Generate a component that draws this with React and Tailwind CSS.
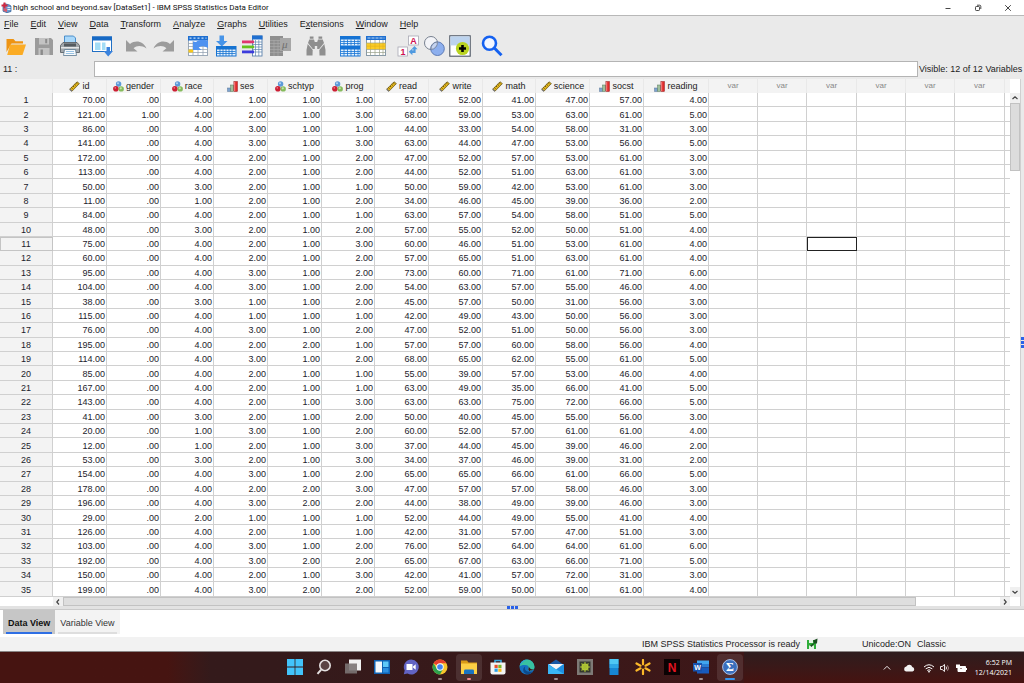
import React, { useState } from 'react';

const VARIABLES = [
  { name: 'id', measure: 'scale' },
  { name: 'gender', measure: 'nominal' },
  { name: 'race', measure: 'nominal' },
  { name: 'ses', measure: 'ordinal' },
  { name: 'schtyp', measure: 'nominal' },
  { name: 'prog', measure: 'nominal' },
  { name: 'read', measure: 'scale' },
  { name: 'write', measure: 'scale' },
  { name: 'math', measure: 'scale' },
  { name: 'science', measure: 'scale' },
  { name: 'socst', measure: 'ordinal' },
  { name: 'reading', measure: 'ordinal' },
];

const EMPTY_COLUMNS = [0, 1, 2, 3, 4, 5];

const COLUMN_WIDTHS = [53, 54, 54, 53, 54, 54, 53, 54, 54, 53, 54, 54, 65, 49, 49, 50, 49, 49, 50, 5];

const CASES = [
  [70, 0, 4, 1, 1, 1, 57, 52, 41, 47, 57, 4],
  [121, 1, 4, 2, 1, 3, 68, 59, 53, 63, 61, 5],
  [86, 0, 4, 3, 1, 1, 44, 33, 54, 58, 31, 3],
  [141, 0, 4, 3, 1, 3, 63, 44, 47, 53, 56, 5],
  [172, 0, 4, 2, 1, 2, 47, 52, 57, 53, 61, 3],
  [113, 0, 4, 2, 1, 2, 44, 52, 51, 63, 61, 3],
  [50, 0, 3, 2, 1, 1, 50, 59, 42, 53, 61, 3],
  [11, 0, 1, 2, 1, 2, 34, 46, 45, 39, 36, 2],
  [84, 0, 4, 2, 1, 1, 63, 57, 54, 58, 51, 5],
  [48, 0, 3, 2, 1, 2, 57, 55, 52, 50, 51, 4],
  [75, 0, 4, 2, 1, 3, 60, 46, 51, 53, 61, 4],
  [60, 0, 4, 2, 1, 2, 57, 65, 51, 63, 61, 4],
  [95, 0, 4, 3, 1, 2, 73, 60, 71, 61, 71, 6],
  [104, 0, 4, 3, 1, 2, 54, 63, 57, 55, 46, 4],
  [38, 0, 3, 1, 1, 2, 45, 57, 50, 31, 56, 3],
  [115, 0, 4, 1, 1, 1, 42, 49, 43, 50, 56, 3],
  [76, 0, 4, 3, 1, 2, 47, 52, 51, 50, 56, 3],
  [195, 0, 4, 2, 2, 1, 57, 57, 60, 58, 56, 4],
  [114, 0, 4, 3, 1, 2, 68, 65, 62, 55, 61, 5],
  [85, 0, 4, 2, 1, 1, 55, 39, 57, 53, 46, 4],
  [167, 0, 4, 2, 1, 1, 63, 49, 35, 66, 41, 5],
  [143, 0, 4, 2, 1, 3, 63, 63, 75, 72, 66, 5],
  [41, 0, 3, 2, 1, 2, 50, 40, 45, 55, 56, 3],
  [20, 0, 1, 3, 1, 2, 60, 52, 57, 61, 61, 4],
  [12, 0, 1, 2, 1, 3, 37, 44, 45, 39, 46, 2],
  [53, 0, 3, 2, 1, 3, 34, 37, 46, 39, 31, 2],
  [154, 0, 4, 3, 1, 2, 65, 65, 66, 61, 66, 5],
  [178, 0, 4, 2, 2, 3, 47, 57, 57, 58, 46, 3],
  [196, 0, 4, 3, 2, 2, 44, 38, 49, 39, 46, 3],
  [29, 0, 2, 1, 1, 1, 52, 44, 49, 55, 41, 4],
  [126, 0, 4, 2, 1, 1, 42, 31, 57, 47, 51, 3],
  [103, 0, 4, 3, 1, 2, 76, 52, 64, 64, 61, 6],
  [192, 0, 4, 3, 2, 2, 65, 67, 63, 66, 71, 5],
  [150, 0, 4, 2, 1, 3, 42, 41, 57, 72, 31, 3],
  [199, 0, 4, 3, 2, 2, 52, 59, 50, 61, 61, 4],
];

// text before the mnemonic, the mnemonic, text after it
const MENUS = [
  ['', 'F', 'ile'],
  ['', 'E', 'dit'],
  ['', 'V', 'iew'],
  ['', 'D', 'ata'],
  ['', 'T', 'ransform'],
  ['', 'A', 'nalyze'],
  ['', 'G', 'raphs'],
  ['', 'U', 'tilities'],
  ['E', 'x', 'tensions'],
  ['', 'W', 'indow'],
  ['', 'H', 'elp'],
];

const formatValue = (value) => value.toFixed(2).replace(/^0\./, '.');

const MeasureIcon = ({ type }) => {
  if (type === 'scale') {
    return (
      <svg viewBox="0 0 11 11" className="w-[11px] h-[11px] shrink-0" aria-hidden="true">
        <path d="M0.7 8.2 8 0.8 10.4 2.6 3 10.2Z" fill="#e2b51c" stroke="#5c4a10" strokeWidth="0.7" />
        <path d="M2.4 6.6l1.2 1M4 5l1.2 1M5.6 3.4l1.2 1M7.2 1.8l1.2 1" stroke="#4a3b08" strokeWidth="0.8" />
        <path d="M0.7 8.2 3 10.2" stroke="#777" strokeWidth="1.2" />
      </svg>
    );
  }
  if (type === 'ordinal') {
    return (
      <svg viewBox="0 0 11 11" className="w-[11px] h-[11px] shrink-0" aria-hidden="true">
        <rect x="0.5" y="7" width="3" height="3.5" fill="#7da3cf" stroke="#5a7698" strokeWidth="0.5" />
        <rect x="3.6" y="4" width="3" height="6.5" fill="#9fc09c" stroke="#55775a" strokeWidth="0.5" />
        <rect x="6.9" y="0.5" width="3.6" height="10" fill="#e02a2a" stroke="#8f2020" strokeWidth="0.5" />
        <rect x="7.2" y="0.8" width="1" height="9.4" fill="#f58a8a" />
      </svg>
    );
  }
  return (
    <svg viewBox="0 0 11 11" className="w-[11px] h-[11px] shrink-0" aria-hidden="true">
      <circle cx="5.6" cy="3" r="2.7" fill="#5c9ad8" />
      <circle cx="5" cy="2.3" r="1" fill="#b5d4f2" />
      <circle cx="2.9" cy="7.7" r="2.8" fill="#cc1f34" />
      <circle cx="8.2" cy="7.9" r="2.7" fill="#85bb5c" />
      <circle cx="7.8" cy="7.3" r="1.1" fill="#c5e6a4" />
      <circle cx="2.3" cy="6.9" r="0.8" fill="#ea7a84" />
    </svg>
  );
};

const ICONS = {
  open: (
    <>
      <path d="M1.5 17V4h7l2 2.3H18v2.2H6.5z" fill="#ee9413" />
      <path d="M5 9.5h16L17.5 20H2.2z" fill="#fbac25" />
    </>
  ),
  save: (
    <>
      <path d="M2 3h16l2 2v15H2z" fill="#9b9b9b" />
      <path d="M6 3h10v6.5H6zM5.5 13h11v7h-11z" fill="#c3c3c3" />
      <path d="M12.2 4h2v4.2h-2zM7.5 14.5h2.4V20H7.500z" fill="#8b8b8b" />
    </>
  ),
  print: (
    <>
      <path d="M5.500 1h9l2 2v6h-11z" fill="#a9d8fa" stroke="#3d86c6" strokeWidth="0.9" />
      <path d="M4 7.500h14l2.500 3v7h-19v-7z" fill="#a2a7ab" stroke="#5d6266" strokeWidth="0.9" />
      <path d="M5 8.500h12v3H5z" fill="#555b60" />
      <path d="M2 12h18v1.500H2z" fill="#e5e7e8" />
      <path d="M5.500 14.500h11l1 6h-13z" fill="#f8fbfd" stroke="#5c7890" strokeWidth="0.8" />
      <path d="M7 16.500h8M6.800 18.500h8.400" stroke="#7fb4dc" strokeWidth="0.8" />
    </>
  ),
  recall: (
    <>
      <rect x="1.500" y="2" width="19" height="14.500" fill="#fff" stroke="#1f6fc4" />
      <path d="M1 1.500h20v4H1z" fill="#1669c4" />
      <path d="M4 7.500h5.500v7.500H4zM11 7.500h3.500v7.500H11z" fill="#a3dcf5" />
      <path d="M15.500 12h3.500v4h3L17.200 21.500 12.500 16h3z" fill="#3b83dd" />
    </>
  ),
  undo: <path d="M1 5v11.500h11.500L8.600 13.200c3.300-2.900 8-2.900 12.900.3C18.500 6.500 11 4.500 5 9z" fill="#9c9c9c" />,
  redo: <path d="M21 5v11.500H9.500l3.900-3.300c-3.300-2.900-8-2.900-12.900.3C3.500 6.500 11 4.500 17 9z" fill="#9c9c9c" />,
  gotoCase: (
    <>
      <rect x="1.500" y="1.500" width="19" height="19" fill="#fff" stroke="#9ba9b8" />
      <path d="M1 1h20v4.500H1z" fill="#1f6fd0" />
      <path d="M2.500 3.200h17" stroke="#c5e1fb" strokeWidth="1.200" strokeDasharray="2 2" />
      <path d="M1.500 8.500h19M1.500 11.500h19M1.500 14.500h19M1.500 17.500h19M6 6v14.500M11 6v14.500M16 6v14.500" stroke="#8c9cae" strokeWidth="0.7" />
      <path d="M1.500 14.500H6v3H1.500z" fill="#f8c81c" />
      <path d="M6 6.500V15h8.500l-2.800-2.600c2.800-1.800 5.800-1.500 9.300.6V6c-4.500-2-8.800-1.500-12 .9z" fill="#4f92f0" />
    </>
  ),
  gotoVariable: (
    <>
      <path d="M4.500 0.500h4.500V6h3.500L6.800 11.500 1 6h3.500z" fill="#4694e8" />
      <path d="M1 11h20.500v10.500H1z" fill="#1673d1" />
      <path d="M2 14.500h18.500v6H2z" fill="#e5f1fc" />
      <path d="M2 16.500h18.500M2 18.500h18.500M5 14v7M8 14v7M11 14v7M14 14v7M17 14v7" stroke="#1673d1" strokeWidth="0.8" />
    </>
  ),
  variables: (
    <>
      <rect x="11.500" y="1" width="9.500" height="20" fill="#fff" stroke="#5d84ad" strokeWidth="0.900" />
      <path d="M11 0.500h10.500v4H11z" fill="#1f6fd0" />
      <path d="M11.500 7h9.500M11.500 9.500h9.500M11.500 12h9.500M11.500 14.500h9.500M11.500 17h9.500M14.500 5v16M17.800 5v16" stroke="#5d84ad" strokeWidth="0.7" />
      <path d="M1 5.500h12v2.800H1z" fill="#e0366f" />
      <path d="M1 10.500h12v2.800H1z" fill="#65c21e" />
      <path d="M1 15.500h12v2.800H1z" fill="#3b3bdc" />
    </>
  ),
  descriptives: (
    <>
      <path d="M1 1h13v20H1z" fill="#8f8f8f" />
      <path d="M1 5.500h13M1 8.500h13M1 11.500h13M1 14.500h13M1 17.500h13M5 5v16M9 5v16" stroke="#a9a9a9" strokeWidth="0.7" />
      <path d="M11 3h11v13H11z" fill="#a7a7a7" />
      <text x="13" y="12.500" fontSize="11" fontStyle="italic" fontFamily="Liberation Serif, serif" fill="#6f6f6f">μ</text>
    </>
  ),
  find: (
    <>
      <path d="M4.800 1.500h3.700v2.300H4.800zM13.500 1.500h3.700v2.300h-3.700z" fill="#8c8c8c" />
      <path d="M4.300 4.500H9l.8 2.500h2.400l.8-2.500h4.700l1.300 3.500-4.800 6h-2v-3H9.800v3h-2L3 8z" fill="#8f8f8f" />
      <path d="M2.700 9l5 6-.2 5.500H1.500V15zM19.300 9l-5 6 .2 5.500h6V15z" fill="#8f8f8f" />
    </>
  ),
  splitFile: (
    <>
      <path d="M1 1h20.500v20.500H1z" fill="#1573d4" />
      <path d="M1.800 4.500h19v6h-19zM1.800 14.500h19v6h-19z" fill="#e5f1fc" />
      <path d="M1.500 6.500h19.500M1.500 8.500h19.500M1.500 16.500h19.500M1.500 18.500h19.500M5 4.500v6M8.500 4.500v6M12 4.500v6M15.500 4.500v6M19 4.500v6M5 14v7M8.500 14v7M12 14v7M15.500 14v7M19 14v7" stroke="#1573d4" strokeWidth="0.800" />
    </>
  ),
  selectCases: (
    <>
      <rect x="1.500" y="1.500" width="19" height="19" fill="#fff" stroke="#8799a8" />
      <path d="M1 1h20v4H1z" fill="#1f6fd0" />
      <path d="M2.500 3h17" stroke="#b8d8f5" strokeWidth="1" strokeDasharray="3 1" />
      <path d="M1.500 8h19v6.500h-19z" fill="#fbcc24" />
      <path d="M1.500 8h19M1.500 14.500h19M1.500 17.500h19M5.500 5v3M10 5v3M14.500 5v3M18 5v3M5.500 14.500v6M10 14.500v6M14.500 14.500v6M18 14.500v6" stroke="#9aa08b" strokeWidth="0.700" />
      <path d="M1.500 11.200h19M5.500 8v6.500M10 8v6.500M14.500 8v6.500M18 8v6.500" stroke="#e0b01c" strokeWidth="0.600" />
    </>
  ),
  valueLabels: (
    <>
      <rect x="11.500" y="1" width="10" height="9" fill="#fff" stroke="#a9a9b4" strokeWidth="0.800" />
      <text x="13.200" y="8.800" fontSize="9" fontWeight="bold" fontFamily="Liberation Sans, sans-serif" fill="#cf1152">A</text>
      <rect x="1" y="12" width="9.500" height="9" fill="#fff" stroke="#a9a9b4" strokeWidth="0.800" />
      <text x="3.400" y="19.800" fontSize="9" fontWeight="bold" fontFamily="Liberation Sans, sans-serif" fill="#cf1152">1</text>
      <path d="M17.500 11l3 3.200h-1.900V18h-3.200v2.200L11.800 16.800l3.600-3.400v2.200h1V14.200h-1.900z" fill="#4f9ae0" />
    </>
  ),
  sets: (
    <>
      <circle cx="8" cy="8" r="6.500" fill="#f3f4f8" stroke="#77808f" />
      <circle cx="14.500" cy="13.700" r="6.800" fill="#83a8ee" fillOpacity="0.900" stroke="#5c7ab5" />
      <path d="M8 14.400a6.800 6.800 0 0 1 6.300-7.400 6.500 6.500 0 0 1-6.300 7.400" fill="#c5d4f2" stroke="#77808f" strokeWidth="0.800" />
    </>
  ),
  showAll: (
    <>
      <rect x="0.800" y="0.800" width="20.400" height="20.400" fill="#fff" stroke="#4c5563" strokeWidth="1.100" />
      <path d="M1.400 1.400h19.200v9H1.400z" fill="#bcd3ee" />
      <circle cx="13.500" cy="13.500" r="6.600" fill="#b9d320" />
      <path d="M13.500 10v7M10 13.500h7" stroke="#000" strokeWidth="2.600" />
    </>
  ),
  search: (
    <>
      <circle cx="8.500" cy="8.300" r="6.500" fill="#f3f6ff" stroke="#1561f0" strokeWidth="2.600" />
      <path d="M13.300 13 20.500 20.300" stroke="#1561f0" strokeWidth="3" />
    </>
  ),
};

const TOOLS = [
  { icon: 'open', label: 'Open data document', margin: '' },
  { icon: 'save', label: 'Save this document', margin: 'ml-1' },
  { icon: 'print', label: 'Print', margin: 'ml-0.5' },
  { icon: 'recall', label: 'Recall recently used dialogs', margin: 'ml-2' },
  { icon: 'undo', label: 'Undo', margin: 'ml-2.5' },
  { icon: 'redo', label: 'Redo', margin: 'ml-1' },
  { icon: 'gotoCase', label: 'Go to case', margin: 'ml-2.5' },
  { icon: 'gotoVariable', label: 'Go to variable', margin: 'ml-1' },
  { icon: 'variables', label: 'Variables', margin: 'ml-0.5' },
  { icon: 'descriptives', label: 'Run descriptive statistics', margin: 'ml-1' },
  { icon: 'find', label: 'Find', margin: 'ml-3' },
  { icon: 'splitFile', label: 'Split file', margin: 'ml-2.5' },
  { icon: 'selectCases', label: 'Select cases', margin: 'ml-0.5' },
  { icon: 'valueLabels', label: 'Value labels', margin: 'ml-2' },
  { icon: 'sets', label: 'Use variable sets', margin: 'ml-0.5' },
  { icon: 'showAll', label: 'Show all variables', margin: 'ml-0.5' },
  { icon: 'search', label: 'Search application', margin: 'ml-2' },
];

const TASKS = [
  {
    label: 'Start',
    art: <path d="M0 0h7.600v7.600H0zM8.400 0H16v7.600H8.400zM0 8.400h7.600V16H0zM8.400 8.400H16V16H8.400z" fill="#42c4fb" />,
  },
  {
    label: 'Search',
    art: (
      <>
        <circle cx="9" cy="6.500" r="5.200" fill="#5b4444" stroke="#e4e0e0" strokeWidth="1.600" />
        <path d="M5.200 10.600 1.500 14.800" stroke="#e4e0e0" strokeWidth="2" />
      </>
    ),
  },
  {
    label: 'Task View',
    art: (
      <>
        <path d="M4 0.500h12v11H4z" fill="#f1f1f1" />
        <path d="M0 4.500h12v10H0z" fill="#7b7474" fillOpacity="0.900" />
      </>
    ),
  },
  {
    label: 'Widgets',
    art: (
      <>
        <path d="M0 1h16v14H0z" fill="#0f62b3" />
        <path d="M1.500 2.500H8v11H1.500z" fill="#f4f8fb" />
        <path d="M9 2.500h5.500v5.500H9z" fill="#5fc9f8" />
        <path d="M9 9h5.500v4.500H9z" fill="#2c8fe0" />
      </>
    ),
  },
  {
    label: 'Chat',
    art: (
      <>
        <path d="M8.200 0.500a7.500 7.500 0 1 1-3.700 14L0.800 15.300l.9-3.700A7.500 7.500 0 0 1 8.200.5" fill="#6264c4" />
        <path d="M3.500 5h6v6h-6zM10 7.500 12.700 5.300v5.400L10 8.500z" fill="#fff" />
      </>
    ),
  },
  {
    label: 'Chrome',
    mark: 'bg-[#a08c8c]',
    art: (
      <>
        <circle cx="8" cy="8" r="7.500" fill="#f7c52c" />
        <path d="M8 8 1.500 4.200A7.500 7.500 0 0 1 14.500 4.300L8 4.300z" fill="#e5402f" />
        <path d="M1.500 4.300A7.500 7.500 0 0 0 8 15.500L11.200 9.800 4.800 9.800z" fill="#2da14d" />
        <circle cx="8" cy="8" r="3.700" fill="#fff" />
        <circle cx="8" cy="8" r="2.800" fill="#4285f0" />
      </>
    ),
  },
  {
    label: 'File Explorer',
    mark: 'bg-[#f08890]',
    tile: true,
    art: (
      <>
        <path d="M0 1.500h6l1.500 2H16v4H0z" fill="#d99b18" />
        <path d="M0 4.500h16V15H0z" fill="#fccf45" />
        <path d="M3 15v-3.200Q3 10.500 4.500 10.500h7q1.500 0 1.500 1.300V15z" fill="#1873c4" />
      </>
    ),
  },
  {
    label: 'Microsoft Store',
    art: (
      <>
        <path d="M5 4V1.500h6V4" fill="none" stroke="#38a7dd" strokeWidth="1.600" />
        <path d="M0.500 3.500h15v10q0 2-2 2h-11q-2 0-2-2z" fill="#f3f3f3" />
        <path d="M4.500 5.800h3.200V9H4.500z" fill="#e8502c" />
        <path d="M8.300 5.800h3.200V9H8.300z" fill="#7ab829" />
        <path d="M4.500 9.600h3.200v3.200H4.500z" fill="#2a9fe6" />
        <path d="M8.300 9.600h3.200v3.200H8.300z" fill="#fbb919" />
      </>
    ),
  },
  {
    label: 'Edge',
    art: (
      <>
        <circle cx="8" cy="8" r="7.500" fill="#1672c0" />
        <path d="M0.500 8A7.500 7.500 0 0 1 15.500 8c0 2.500-2 3.700-4.200 3.500-1.500-.1-2.300-.6-2.100-1.200 1-1 .8-4.200-2.700-4.300C3.500 5.900 1 6.500.5 8" fill="#38c1a0" />
        <path d="M0.600 7A7.500 7.500 0 0 1 8 .500C4 2 2 4.500.600 7" fill="#2a9bdd" />
        <path d="M6.300 7.500c-1.500 3 1 6.500 7.700 5-3 4-8 3.200-9.500-.1-.8-1.900 0-4 1.800-4.900" fill="#0d4a8c" />
        <path d="M9.200 10.300c.8-.9.800-2.100.2-3 1.500 2.500 3.500 4 5.800 3-.8 1.400-5.500 1.700-6 0" fill="#3a1718" />
      </>
    ),
  },
  {
    label: 'Mail',
    mark: 'bg-[#a08c8c]',
    art: (
      <>
        <path d="M0 6 8 0.500 16 6z" fill="#1558a5" />
        <path d="M0 5h16v10H0z" fill="#1e8fe0" />
        <path d="M0.500 5h15L8 10.500z" fill="#f2f4f6" />
        <path d="M0 5.500 16 15H0z" fill="#39b6f5" />
      </>
    ),
  },
  {
    label: 'Plant app',
    art: (
      <>
        <path d="M0 0h16v16H0z" fill="#7e7a76" />
        <path d="M2.500 2.500h11v11h-11z" fill="#33362f" />
        <circle cx="8" cy="8" r="3.600" fill="#b9cf3b" />
        <path d="M8 3v10M3 8h10M4.500 4.500l7 7M11.500 4.500l-7 7" stroke="#a7bd32" strokeWidth="1.100" />
      </>
    ),
  },
  {
    label: 'Your Phone',
    art: (
      <>
        <path d="M3.500 0h9v16h-9z" fill="#1787d4" />
        <path d="M3.500 0h9v5h-9z" fill="#4fc8f4" />
        <path d="M3.500 5h9v4h-9z" fill="#2ea7e6" />
      </>
    ),
  },
  {
    label: 'Walmart',
    art: (
      <path d="M8 1v4.300M8 10.700V15M1.500 4.500l4 2.200M10.500 9.300l4 2.200M1.500 11.500l4-2.200M10.500 6.700l4-2.200" stroke="#fbb829" strokeWidth="2.200" strokeLinecap="round" />
    ),
  },
  {
    label: 'Netflix',
    art: (
      <>
        <path d="M0 0h16v16H0z" fill="#0a0203" />
        <text x="8" y="12.500" textAnchor="middle" fontSize="12" fontWeight="bold" fontFamily="Liberation Sans, sans-serif" fill="#e01420">N</text>
      </>
    ),
  },
  {
    label: 'Word',
    mark: 'bg-[#a08c8c]',
    art: (
      <>
        <path d="M4 1.500h12v3.500H4z" fill="#41a5ee" />
        <path d="M4 5h12v3.300H4z" fill="#2b7cd3" />
        <path d="M4 8.300h12V14.500H4z" fill="#185abd" />
        <path d="M0 4h9v8.500H0z" fill="#1752ad" />
        <text x="4.500" y="10.800" textAnchor="middle" fontSize="7" fontWeight="bold" fontFamily="Liberation Sans, sans-serif" fill="#fff">W</text>
      </>
    ),
  },
  {
    label: 'SPSS Statistics',
    mark: 'bg-[#3494f0]',
    tile: true,
    wide: true,
    art: (
      <>
        <circle cx="8" cy="8" r="7.400" fill="#3a6fbd" stroke="#b5cdf0" strokeWidth="0.900" />
        <text x="8" y="12.200" textAnchor="middle" fontSize="12" fontWeight="bold" fontFamily="Liberation Serif, serif" fill="#fff">Σ</text>
      </>
    ),
  },
];

const TitleBar = () => (
  <header className="h-4 shrink-0 flex items-center bg-white border-b border-[#b8b8b8] pl-px">
    <svg viewBox="0 0 11 11" className="w-[11px] h-[11px] shrink-0" aria-hidden="true">
      <path d="M3 1.500 8.500 3 10 4v5.500l-4 1.200-4-1.500V5z" fill="#6d9bd0" stroke="#2d5b94" strokeWidth="0.700" />
      <path d="M0.500 3.500h6M3.500 0.500v6" stroke="#d3283f" strokeWidth="2" />
      <path d="M2.500 6.500h3.500v3.500L2.500 9z" fill="#d95a6a" />
      <path d="M6.500 5.500H9.500M6.500 7.500h3" stroke="#fff" strokeWidth="0.800" />
    </svg>
    <h1 className="ml-px text-[8px] leading-3 font-[Roboto,sans-serif] text-[#111]">
      high school and beyond.sav [DataSet1] - IBM SPSS Statistics Data Editor
    </h1>
    <div className="ml-auto flex pr-px">
      <button aria-label="Minimize" className="w-[30px] h-3.5 flex items-center justify-center">
        <svg viewBox="0 0 8 8" className="w-2 h-2"><path d="M1.500 4.500h5" stroke="#333" strokeWidth="0.900" /></svg>
      </button>
      <button aria-label="Restore" className="w-[30px] h-3.5 flex items-center justify-center">
        <svg viewBox="0 0 8 8" className="w-2 h-2" fill="none" stroke="#333" strokeWidth="0.900">
          <rect x="1.500" y="2.500" width="4" height="4" rx="0.800" />
          <path d="M3 1.200h2.700q1.100 0 1.100 1.100V5" />
        </svg>
      </button>
      <button aria-label="Close" className="w-[30px] h-3.5 flex items-center justify-center">
        <svg viewBox="0 0 8 8" className="w-2 h-2"><path d="M1.200 1.200l5.600 5.600M6.800 1.200 1.200 6.800" stroke="#333" strokeWidth="0.900" /></svg>
      </button>
    </div>
  </header>
);

const MenuBar = () => (
  <nav className="h-4 shrink-0 flex items-center gap-3 pl-1 text-[9px] leading-3 text-[#222]">
    {MENUS.map(([before, key, after]) => (
      <button key={key}>
        {before}
        <u className="underline-offset-1">{key}</u>
        {after}
      </button>
    ))}
  </nav>
);

const ToolBar = () => (
  <div className="h-7 shrink-0 flex items-center pl-1" role="toolbar">
    {TOOLS.map((tool) => (
      <button key={tool.icon} aria-label={tool.label} className={`w-6 h-6 flex items-center justify-center ${tool.margin}`}>
        <svg viewBox="0 0 22 22" className="w-[22px] h-[22px]">{ICONS[tool.icon]}</svg>
      </button>
    ))}
  </div>
);

const Chevron = ({ d }) => (
  <svg viewBox="0 0 8 8" className="w-2 h-2" fill="none" stroke="#444" strokeWidth="1.200">
    <path d={d} />
  </svg>
);

const DataGrid = ({ selected, onSelect }) => (
  <table className="w-full h-full table-fixed border-separate border-spacing-0 text-[9px] leading-3 text-[#1c1c2c]">
    <colgroup>
      {COLUMN_WIDTHS.map((width, i) => (
        <col key={i} style={{ width }} />
      ))}
    </colgroup>
    <thead>
      <tr className="h-3.5 bg-[#f3f3f3]">
        <td className="border-r border-[#e9e9e9]" />
        {VARIABLES.map((variable) => (
          <th key={variable.name} scope="col" className="p-0 font-normal border-r border-[#e9e9e9] text-[#222]">
            <div className="flex items-center justify-center gap-0.5">
              <MeasureIcon type={variable.measure} />
              {variable.name}
            </div>
          </th>
        ))}
        {EMPTY_COLUMNS.map((i) => (
          <th key={i} scope="col" className="p-0 font-normal text-[8px] text-[#888] border-r border-[#e9e9e9]">var</th>
        ))}
        <td />
      </tr>
    </thead>
    <tbody>
      {CASES.map((values, row) => (
        <tr key={values[0]}>
          <th
            scope="row"
            className={`p-0 pt-px font-normal bg-[#f3f3f3] border-r border-b ${selected.row === row ? 'border-[#c4c4c4] outline outline-[#c4c4c4] -outline-offset-1' : 'border-[#d0d0d0]'}`}
          >
            {row + 1}
          </th>
          {values.map((value, i) => (
            <td key={i} className="p-0 pt-px pr-px text-right border-r border-b border-[#d0d0d0]">{formatValue(value)}</td>
          ))}
          {EMPTY_COLUMNS.map((i) => (
            <td
              key={i}
              onClick={() => onSelect({ row, column: i })}
              className={`p-0 border-r border-b border-[#d0d0d0] ${selected.row === row && selected.column === i ? 'outline outline-[#222] -outline-offset-1' : ''}`}
            />
          ))}
          <td className="p-0 border-b border-[#d0d0d0]" />
        </tr>
      ))}
    </tbody>
  </table>
);

const VerticalScroll = () => (
  <div className="w-2.5 shrink-0 flex flex-col pt-3.5 bg-white">
    <button aria-label="Scroll up" className="h-2.5 flex items-center justify-center bg-[#f0f0f0]">
      <Chevron d="M1.500 5 4 2.800 6.500 5" />
    </button>
    <div className="flex-1">
      <div className="h-[14%] bg-[#dcdcdc] border border-[#c2c2c2]" />
    </div>
    <button aria-label="Scroll down" className="h-2.5 flex items-center justify-center bg-[#f0f0f0]">
      <Chevron d="M1.500 3 4 5.200 6.500 3" />
    </button>
  </div>
);

const HorizontalScroll = () => (
  <div className="h-[9px] shrink-0 flex pl-[53px] pr-2.5 bg-white">
    <button aria-label="Scroll left" className="w-2.5 flex items-center justify-center bg-[#f0f0f0]">
      <Chevron d="M5 1.500 2.800 4 5 6.500" />
    </button>
    <div className="flex-1">
      <div className="w-[91%] h-full bg-[#dedede] border border-[#c2c2c2]" />
    </div>
    <button aria-label="Scroll right" className="w-2.5 flex items-center justify-center bg-[#f0f0f0]">
      <Chevron d="M3 1.500 5.200 4 3 6.500" />
    </button>
  </div>
);

const Dots = ({ className }) => (
  <div className={`flex gap-px ${className}`}>
    <i className="w-[3px] h-[3px] bg-[#2a62e8]" />
    <i className="w-[3px] h-[3px] bg-[#2a62e8]" />
    <i className="w-[3px] h-[3px] bg-[#2a62e8]" />
  </div>
);

const ViewTabs = ({ view, onChange }) => (
  <div className="h-[27px] shrink-0 flex items-start pl-[3px] bg-white text-[9px] leading-3" role="tablist">
    {['Data View', 'Variable View'].map((name) => {
      const active = view === name;
      return (
        <button
          key={name}
          role="tab"
          aria-selected={active}
          onClick={() => onChange(name)}
          className={`h-6 flex flex-col justify-end px-[3px] ${active ? 'bg-[#c6c6c6] font-bold text-[#111]' : 'bg-[#f3f3f3] text-[#333]'}`}
        >
          <span className={`px-0.5 pb-[3px] border-b-2 ${active ? 'border-[#2f6fe4]' : 'border-[#dedede]'}`}>{name}</span>
        </button>
      );
    })}
  </div>
);

const StatusBar = () => (
  <footer className="h-[15px] shrink-0 flex items-center justify-end bg-[#f2f2f2] border-b border-[#8a8585] text-[9px] leading-3 text-[#222] pr-[78px]">
    <span>IBM SPSS Statistics Processor is ready</span>
    <svg viewBox="0 0 12 12" className="w-3 h-3 ml-1.5" aria-hidden="true">
      <path d="M1 2h8l1 1v8H1z" fill="#2fae3b" />
      <path d="M3 2h4v3H3zM3 7.500h5V11H3z" fill="#e5f5e5" />
      <path d="M4 7.500 8 5 7 2.500 11.500 0.500 11 5.500 8.500 5.500 5.500 9z" fill="#1b4d20" />
    </svg>
    <span className="ml-11">Unicode:ON</span>
    <span className="ml-1.5">Classic</span>
  </footer>
);

const TaskBar = () => (
  <div className="h-[31px] shrink-0 grid grid-cols-[1fr_auto_1fr] bg-[#3b1718]">
    <div className="bg-linear-to-r from-[#461411] from-60% to-[#341a1b] to-75%" />
    <div className="flex bg-linear-to-r from-[#341a1b] to-[#3e1718]">
      {TASKS.map((task) => (
        <button key={task.label} aria-label={task.label} className="w-[29px] flex flex-col items-center justify-center">
          <span className={`w-[26px] h-[27px] rounded-sm flex flex-col items-center pt-[5px] ${task.tile ? 'bg-white/10' : ''}`}>
            <svg viewBox="0 0 16 16" className="w-4 h-4">{task.art}</svg>
            {task.mark && <i className={`mt-[3px] h-0.5 rounded-full ${task.wide ? 'w-2.5' : 'w-1'} ${task.mark}`} />}
          </span>
        </button>
      ))}
    </div>
    <div className="flex items-center justify-end pr-3 text-white bg-linear-to-b from-[#2e1c1e] to-[#461210]">
      <svg viewBox="0 0 8 8" className="w-2 h-2" fill="none" stroke="#fff" strokeWidth="0.900" aria-hidden="true">
        <path d="M0.800 5.500 4 2.300 7.200 5.500" />
      </svg>
      <svg viewBox="0 0 12 10" className="w-3 h-2.5 ml-3" aria-hidden="true">
        <path d="M3 8.500a2.500 2.500 0 0 1 .3-4.900A3.300 3.300 0 0 1 9.300 4a2.300 2.300 0 0 1 .2 4.500z" fill="#f2f2f2" />
      </svg>
      <svg viewBox="0 0 12 10" className="w-3 h-2.5 ml-2" fill="none" stroke="#fff" aria-hidden="true">
        <path d="M1 4q5-4.500 10 0M2.700 5.800q3.300-3 6.600 0M4.300 7.500q1.700-1.500 3.400 0" />
        <circle cx="6" cy="8.700" r="0.500" fill="#fff" />
      </svg>
      <svg viewBox="0 0 12 10" className="w-3 h-2.5 ml-1" fill="none" stroke="#fff" strokeWidth="0.900" aria-hidden="true">
        <path d="M1.500 3.500h1.700L5.500 1.500v7L3.200 6.500H1.500zM7 3.500q1 1.500 0 3" />
        <path d="M8.500 2.300q2 2.700 0 5.400" stroke="#b59c9c" />
      </svg>
      <svg viewBox="0 0 12 10" className="w-3 h-2.5 ml-1" aria-hidden="true">
        <path d="M3 3.500h7.500v5H3z" fill="#fff" stroke="#fff" />
        <path d="M1 1.500h4v3.500H1z" fill="#fff" />
        <path d="M11 5h1v2h-1z" fill="#fff" />
        <path d="M5.500 5.500h1" stroke="#421513" />
      </svg>
      <div className="ml-2 text-right text-[7px] leading-[10px] font-['Open_Sans',sans-serif]">
        <div>6:52 PM</div>
        <div>12/14/2021</div>
      </div>
    </div>
  </div>
);

export default function App() {
  const [selected, setSelected] = useState({ row: 10, column: 2 });
  const [view, setView] = useState('Data View');
  const [cellValue, setCellValue] = useState('');

  return (
    <div className="h-screen flex flex-col bg-[#eaeaea] font-['Liberation_Sans',Arial,sans-serif]">
      <TitleBar />
      <MenuBar />
      <ToolBar />
      <div className="h-[17px] shrink-0 flex items-center text-[9px] leading-3 text-[#222]">
        <label htmlFor="cell" className="w-[94px] pl-[3px]">{selected.row + 1} :</label>
        <input
          id="cell"
          value={cellValue}
          onChange={(e) => setCellValue(e.target.value)}
          className="flex-1 h-4 px-1 bg-white border border-[#b4b4b4] outline-none"
        />
        <span className="w-[106px] pl-px whitespace-nowrap">Visible: 12 of 12 Variables</span>
      </div>
      <main className="flex-1 min-h-0 flex pt-0.5">
        <div className="flex-1 flex flex-col">
          <div className="flex-1 min-h-0 flex bg-white">
            <div className="flex-1">
              <DataGrid selected={selected} onSelect={setSelected} />
            </div>
            <VerticalScroll />
          </div>
          <HorizontalScroll />
        </div>
        <div className="w-1 shrink-0 flex items-center border-l border-[#d0d0d0]">
          <Dots className="flex-col" />
        </div>
      </main>
      <div className="h-1 shrink-0 flex justify-center bg-[#e2e2e2] border-b border-[#c9c9c9]">
        <Dots className="" />
      </div>
      <ViewTabs view={view} onChange={setView} />
      <StatusBar />
      <TaskBar />
    </div>
  );
}
